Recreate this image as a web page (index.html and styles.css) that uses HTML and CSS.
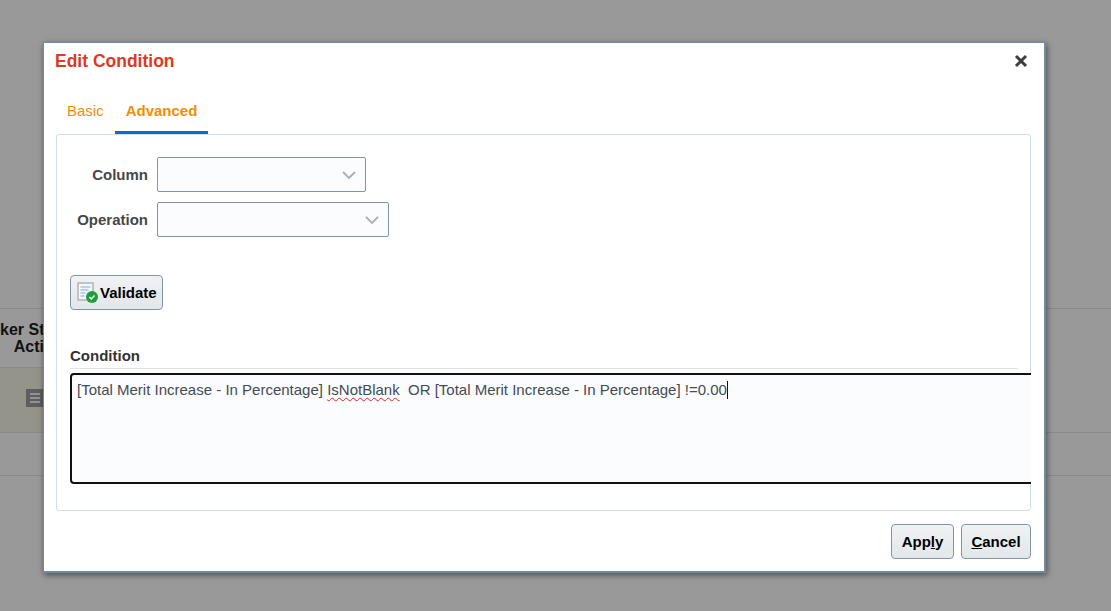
FILE: index.html
```html
<!DOCTYPE html>
<html lang="en">
<head>
<meta charset="utf-8">
<title>Edit Condition</title>
<link rel="stylesheet" href="styles.css">
</head>
<body>
<main class="backdrop">
  <div class="table">
    <div class="row head"><div class="cell-head"><div class="line-one">ker St</div><div class="line-two">Acti</div></div></div>
    <div class="row band-row"><div class="band"><span class="menu-btn"><svg viewBox="0 0 17 18" width="17" height="18"><rect width="17" height="18" fill="#5e5e5e"/><path d="M4 5h10M4 9h10M4 13h10" stroke="#a4a4a4" stroke-width="1.6"/></svg></span></div></div>
    <div class="row plain"></div>
  </div>
</main>
<section class="dialog">
  <header class="dialog-head">
    <h1 class="title">Edit Condition</h1>
    <svg class="close" viewBox="0 0 14 14" width="14" height="14"><path d="M2 2l10 10M12 2L2 12" stroke="#3d3d3d" stroke-width="3"/></svg>
  </header>
  <nav class="tabs">
    <span class="tab">Basic</span>
    <span class="tab active">Advanced</span>
  </nav>
  <div class="panel">
    <div class="form-row first">
      <label class="label">Column</label>
      <div class="select short"><svg viewBox="0 0 14 8" width="14" height="8"><path d="M1 1l6 6 6-6" fill="none" stroke="#a9afb4" stroke-width="1.8"/></svg></div>
    </div>
    <div class="form-row second">
      <label class="label">Operation</label>
      <div class="select long"><svg viewBox="0 0 14 8" width="14" height="8"><path d="M1 1l6 6 6-6" fill="none" stroke="#a9afb4" stroke-width="1.8"/></svg></div>
    </div>
    <button class="btn validate" type="button">
      <svg viewBox="0 0 21 21" width="21" height="21"><rect x="1" y="1" width="15" height="17" fill="#f4f6f8" stroke="#b4b8bc" stroke-width="1.6"/><path d="M3.5 5h10M3.5 8h8M3.5 11h5M3.5 14h4" stroke="#7fb2dc" stroke-width="1.2"/><circle cx="15" cy="15" r="6" fill="#1f9d3c"/><path d="M12.3 15l2 2 3.2-3.6" fill="none" stroke="#fff" stroke-width="1.5"/></svg>
      <span>Validate</span>
    </button>
    <div class="cond-head">Condition</div>
    <div class="editor-clip">
      <div class="editor">[Total Merit Increase - In Percentage] <span class="misspelt">IsNotBlank</span>&nbsp; OR [Total Merit Increase - In Percentage] !=0.00<span class="caret"></span></div>
    </div>
  </div>
  <footer class="actions">
    <button class="btn action apply" type="button">App<u>l</u>y</button>
    <button class="btn action cancel" type="button"><u>C</u>ancel</button>
  </footer>
</section>
</body>
</html>
```
FILE: styles.css
```css
* { box-sizing: border-box; }
html, body { margin: 0; height: 100%; }
body {
  width: 1111px;
  height: 611px;
  overflow: hidden;
  background: #999999;
  font-family: "Liberation Sans", Arial, sans-serif;
  position: relative;
}
.backdrop { padding-top: 308px; }
.table { display: flex; flex-direction: column; }
.row { border-top: 1px solid #868b90; }
.head { height: 59px; }
.cell-head {
  width: 44px;
  white-space: nowrap;
  text-align: right;
  font-size: 16px;
  font-weight: 700;
  line-height: 17px;
  color: #111;
  padding-top: 12px;
}
.band-row { height: 65px; border-top: 0; }
.band {
  width: 500px;
  height: 65px;
  background: #94948b;
  border-top: 1px solid #868b90;
  padding: 21px 0 0 26px;
}
.menu-btn { display: block; width: 17px; height: 18px; }
.menu-btn svg { display: block; }
.plain { height: 44px; border-bottom: 1px solid #868b90; }

.dialog {
  position: absolute;
  left: 43px;
  top: 42px;
  width: 1003px;
  height: 531px;
  background: #fff;
  border: 2px solid #6f8ba3;
  border-width: 1px 2px 2px 1px;
  box-shadow: 1px 2px 6px rgba(0,0,0,.5);
  padding: 0 14px 0 12px;
}
.dialog-head {
  display: flex;
  justify-content: space-between;
  align-items: center;
  height: 36px;
}
.title { margin: 0 0 0 -1px; font-size: 17.5px; line-height: 36px; font-weight: 700; color: #e0391f; }
.close { margin-right: 2px; }
.tabs { display: flex; height: 55px; padding-top: 18px; }
.tab {
  font-size: 15px;
  line-height: 27px;
  color: #f09000;
  padding: 0 11px;
  height: 37px;
}
.active { font-weight: 700; border-bottom: 3px solid #0f6cc4; }
.panel {
  width: 975px;
  height: 377px;
  border: 1px solid #d2dde5;
  border-radius: 3px;
  padding: 22px 0 0 13px;
}
.form-row { display: flex; align-items: center; height: 35px; }
.second { margin-top: 10px; }
.label {
  width: 78px;
  text-align: right;
  font-size: 15px;
  font-weight: 700;
  color: #474747;
  margin-right: 9px;
}
.select {
  height: 35px;
  background: #fbfcfe;
  border: 1px solid #7f96a6;
  border-radius: 2px;
  display: flex;
  justify-content: flex-end;
  align-items: center;
  padding-right: 9px;
}
.short { width: 209px; }
.long { width: 232px; }
.btn {
  font-family: "Liberation Sans", Arial, sans-serif;
  font-size: 15px;
  font-weight: 700;
  color: #000;
  background: linear-gradient(#f0f2f4, #e3e7ea);
  border: 1px solid #7f96a6;
  border-radius: 4px;
  display: flex;
  align-items: center;
  justify-content: center;
  padding: 0;
}
.validate {
  width: 93px;
  height: 35px;
  margin-top: 38px;
  padding-left: 6px;
  gap: 2px;
  justify-content: flex-start;
}
.validate svg { flex: none; }
.cond-head {
  margin-top: 36px;
  width: 948px;
  height: 23px;
  font-size: 15px;
  font-weight: 700;
  line-height: 20px;
  color: #333;
  border-bottom: 1px solid #dfe4e8;
}
.editor-clip { overflow: hidden; width: 961px; margin-top: 4px; }
.editor {
  width: 1000px;
  height: 111px;
  background: #fbfcfe;
  border: 2px solid #111;
  border-radius: 4px;
  padding: 6px 5px;
  font-size: 15px;
  line-height: 18px;
  color: #444b52;
  white-space: pre-wrap;
}
.misspelt { text-decoration: underline wavy #e02020 1px; text-underline-offset: 2px; }
.caret { display: inline-block; width: 1px; height: 18px; background: #111; vertical-align: -4px; }
.actions { display: flex; justify-content: flex-end; gap: 7px; width: 975px; padding-top: 13px; }
.action { height: 35px; }
.apply { width: 63px; }
.cancel { width: 70px; }
```
